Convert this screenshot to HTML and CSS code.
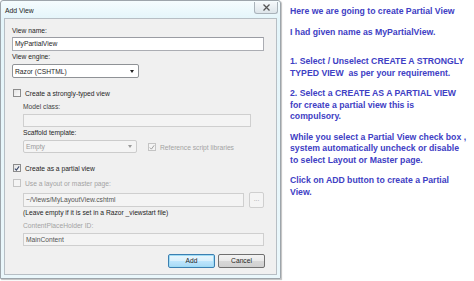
FILE: index.html
```html
<!DOCTYPE html>
<html>
<head>
<meta charset="utf-8">
<link rel="stylesheet" href="styles.css">
</head>
<body>
<div class="page">
  <div class="dialog">
    <div class="titlebar">
      <span class="title">Add View</span>
      <span class="close"><svg width="9" height="7" viewBox="0 0 9 7"><path d="M1.5 0.5 L7.5 6.5 M7.5 0.5 L1.5 6.5" stroke="#555" stroke-width="1.3" fill="none"/></svg></span>
    </div>
    <div class="client">
      <div class="lbl l1">View name:</div>
      <div class="inp in1">MyPartialView</div>
      <div class="lbl l2">View engine:</div>
      <div class="sel sel1"><span>Razor (CSHTML)</span><span class="arrow"></span></div>
      <div class="chkrow r1"><span class="cb"></span><span>Create a strongly-typed view</span></div>
      <div class="indent">
        <div class="lbl l3">Model class:</div>
        <div class="inp dinp in2"></div>
        <div class="lbl l4">Scaffold template:</div>
        <div class="selrow">
          <div class="sel dsel sel2"><span>Empty</span><span class="arrow grey"></span></div>
          <div class="chkrow dis refrow"><span class="cb dcb checked"><svg width="7" height="7" viewBox="0 0 7 7"><path d="M1 3.6 L2.8 5.4 L6 1" stroke="#9a9a9a" stroke-width="1.1" fill="none"/></svg></span><span>Reference script libraries</span></div>
        </div>
      </div>
      <div class="chkrow r2"><span class="cb checked"><svg width="7" height="7" viewBox="0 0 7 7"><path d="M1 3.6 L2.8 5.4 L6 1" stroke="#3b4a6b" stroke-width="1.2" fill="none"/></svg></span><span>Create as a partial view</span></div>
      <div class="chkrow dis r3"><span class="cb dcb"></span><span>Use a layout or master page:</span></div>
      <div class="indent">
        <div class="layrow">
          <div class="inp dinp in3">~/Views/MyLayoutView.cshtml</div>
          <div class="dots">...</div>
        </div>
        <div class="lbl l5">(Leave empty if it is set in a Razor _viewstart file)</div>
        <div class="lbl dis l6">ContentPlaceHolder ID:</div>
        <div class="inp dinp in4">MainContent</div>
      </div>
      <div class="buttons">
        <div class="btn def">Add</div>
        <div class="btn">Cancel</div>
      </div>
    </div>
  </div>
  <div class="notes">
    <p class="n1">Here we are going to create Partial View</p>
    <p class="n2">I had given name as MyPartialView.</p>
    <p>1. Select / Unselect CREATE A STRONGLY<br>TYPED VIEW &nbsp;as per your requirement.</p>
    <p>2. Select a CREATE AS A PARTIAL VIEW<br>for create a partial view this is<br>compulsory.</p>
    <p>While you select a Partial View check box ,<br>system automatically uncheck or disable<br>to select Layout or Master page.</p>
    <p>Click on ADD button to create a Partial<br>View.</p>
  </div>
</div>
</body>
</html>
```
FILE: styles.css
```css
* { box-sizing: border-box; }
html, body { margin: 0; padding: 0; background: #fff; }
body { width: 474px; height: 281px; overflow: hidden; }
.page { display: flex; height: 281px; }

.dialog {
  width: 281px;
  height: 279px;
  margin-right: 2px;
  border: 1px solid #9da5ab;
  border-radius: 3px 3px 0 0;
  background: linear-gradient(#f5fcfe, #e4f5fa 18px, #eaf7fb);
  box-shadow: 1px 1px 1px rgba(0,0,0,0.25);
  display: flex;
  flex-direction: column;
  font-family: "Liberation Sans", Arial, sans-serif;
  font-size: 6.7px;
  color: #1e1e1e;
}
.titlebar {
  height: 17px;
  display: flex;
  align-items: center;
  justify-content: space-between;
  padding: 0 2px 0 4px;
}
.title { font-size: 6.8px; color: #222; margin-top: 2px; }
.close {
  width: 24px;
  height: 12px;
  margin-top: -3px;
  border: 1px solid #a9b3ba;
  border-top: none;
  border-radius: 0 0 3px 3px;
  background: linear-gradient(#f4f8fa, #dde5ea);
  display: flex;
  align-items: center;
  justify-content: center;
}
.client {
  flex: 1;
  margin: 0 3px 3px 3px;
  border: 1px solid #b7bec4;
  background: #f0f0f0;
  padding: 7px 12px 0 7px;
  display: flex;
  flex-direction: column;
}
.lbl { height: 10px; line-height: 10px; white-space: nowrap; }
.dis { color: #a3a3a3; }
.l2 { margin-top: 1px; }
.l3 { margin-top: 4px; color: #444; }
.l4 { margin-top: 1px; }
.l6 { margin-top: 3px; }

.inp {
  height: 14px;
  border: 1px solid #abadb3;
  border-top-color: #9a9ca3;
  background: #fff;
  line-height: 12px;
  padding-left: 2px;
  white-space: nowrap;
}
.in1 { margin-top: 1px; }
.dinp { background: #f4f4f4; border-color: #cfcfcf; color: #7a7a7a; height: 13px; line-height: 11px; }
.in2 { margin-top: 2px; margin-right: 13px; }
.in3 { flex: 1; height: 14px; line-height: 12px; color: #555; }
.in4 { margin-top: 2px; color: #555; }

.sel {
  height: 14px;
  width: 127px;
  border: 1px solid #8f9296;
  border-radius: 2px;
  background: #fff;
  display: flex;
  align-items: center;
  justify-content: space-between;
  padding: 0 4px 0 2px;
}
.sel1 { margin-top: 2px; }
.arrow {
  width: 0; height: 0;
  border-left: 2.5px solid transparent;
  border-right: 2.5px solid transparent;
  border-top: 3px solid #222;
}
.arrow.grey { border-top-color: #9a9a9a; }
.dsel { height: 13px; width: 114px; background: #f4f4f4; border-color: #cccccc; color: #9a9a9a; }

.chkrow { display: flex; align-items: center; height: 10px; white-space: nowrap; }
.cb {
  width: 8px; height: 8px;
  margin: 0 4px 0 1px;
  border: 1px solid #8c8c8c;
  background: linear-gradient(135deg, #e4e4e4, #fbfbfb);
  display: flex; align-items: center; justify-content: center;
}
.dcb { border-color: #c4c4c4; background: #f4f4f4; }
.r1 { margin-top: 10px; }
.r2 { margin-top: 10px; }
.r3 { margin-top: 5px; }

.indent { padding-left: 11px; display: flex; flex-direction: column; }
.selrow { display: flex; align-items: center; margin-top: 2px; gap: 10px; }
.refrow { margin-top: 1px; }

.layrow { display: flex; align-items: center; margin-top: 4px; gap: 5px; height: 16px; }
.dots {
  width: 15px; height: 16px;
  border: 1px solid #cfcfcf;
  border-radius: 2px;
  background: #f4f4f4;
  color: #a0a0a0;
  text-align: center;
  line-height: 11px;
}

.buttons { display: flex; justify-content: flex-end; gap: 3px; margin-top: 8px; margin-right: -1px; }
.btn {
  width: 47px; height: 14px;
  border: 1px solid #707070;
  border-radius: 2px;
  background: linear-gradient(#f3f3f3, #e9e9e9 50%, #d8d8d8 51%, #d0d0d0);
  text-align: center;
  line-height: 12px;
}
.btn.def { border-color: #3c7fb1; box-shadow: inset 0 0 0 1px #9fdcf5; background: linear-gradient(#eaf6fd, #d9f0fc 50%, #bee6fd 51%, #a7d9f5); }

.notes {
  flex: 1;
  padding: 6px 0 0 7px;
  font-family: "Liberation Sans", Arial, sans-serif;
  font-weight: bold;
  font-size: 8.7px;
  line-height: 11.5px;
  color: #4040c4;
  white-space: nowrap;
}
.notes p { margin: 0 0 9px 0; }
.notes p.n2 { margin-bottom: 18px; }
```
